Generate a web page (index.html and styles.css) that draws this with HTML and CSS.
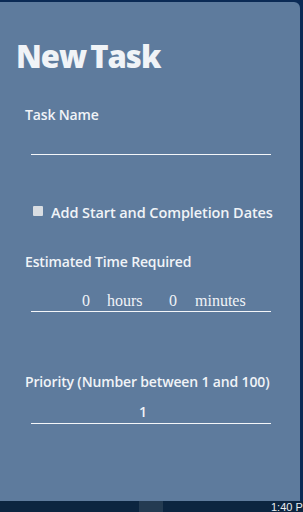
FILE: index.html
```html
<!DOCTYPE html>
<html>
<head>
<meta charset="utf-8">
<link rel="stylesheet" href="styles.css">
</head>
<body>
<div class="screen">
  <main class="panel">
    <h1 class="title">New<span class="gap"></span>Task</h1>
    <section class="field field-name">
      <label class="label">Task Name</label>
      <div class="input"></div>
    </section>
    <div class="check-row">
      <span class="checkbox"></span>
      <span class="check-label">Add Start and Completion Dates</span>
    </div>
    <section class="field field-time">
      <label class="label">Estimated Time Required</label>
      <div class="input time-input">
        <span class="num n1">0</span>
        <span class="unit u1">hours</span>
        <span class="num n2">0</span>
        <span class="unit u2">minutes</span>
      </div>
    </section>
    <section class="field field-priority">
      <label class="label">Priority (Number between 1 and 100)</label>
      <div class="input priority-input">1</div>
    </section>
  </main>
  <footer class="taskbar">
    <span class="tb-item"></span>
    <span class="clock">1:40 P</span>
  </footer>
</div>
</body>
</html>
```

FILE: styles.css
```css
html, body {
  margin: 0;
  padding: 0;
  width: 303px;
  height: 512px;
  overflow: hidden;
  background: #0b2a55;
}
.screen {
  display: flex;
  flex-direction: column;
  height: 512px;
}
.panel {
  margin-top: 2px;
  width: 300px;
  height: 499px;
  background: #5e7b9d;
  border-top-right-radius: 6px;
  color: #f0f3f7;
  font-family: "Open Sans", sans-serif;
  box-sizing: border-box;
  padding-top: 33px;
}
.title {
  margin: 0 0 0 16px;
  font-size: 31px;
  font-weight: 800;
  letter-spacing: -1px;
  line-height: 42px;
}
.gap { display: inline-block; width: 4px; }
.field {
  padding-left: 25px;
}
.label {
  display: block;
  font-size: 14px;
  font-weight: 600;
  letter-spacing: -0.15px;
  line-height: 18px;
}
.input {
  margin-left: 6px;
  width: 240px;
  border-bottom: 1.5px solid #f4f6f9;
  box-sizing: border-box;
}
.field-name { margin-top: 29px; }
.field-name .input { height: 31px; }
.check-row {
  display: flex;
  align-items: center;
  margin: 48px 0 0 33px;
}
.checkbox {
  width: 10px;
  height: 10px;
  background: #d9dde2;
  border-radius: 1px;
  margin-right: 8px;
  margin-top: -4px;
}
.check-label {
  font-size: 14.5px;
  font-weight: 600;
  letter-spacing: -0.1px;
  line-height: 20px;
}
.field-time { margin-top: 30px; }
.time-input {
  margin-top: 21px;
  height: 20px;
  position: relative;
  font-family: "Liberation Serif", serif;
  font-size: 16px;
}
.time-input span { position: absolute; top: 0; line-height: 18px; }
.n1 { left: 51px; }
.u1 { left: 76px; }
.n2 { left: 138px; }
.u2 { left: 164px; }
.field-priority { margin-top: 61px; }
.priority-input {
  margin-top: 12px;
  height: 21px;
  padding-right: 16px;
  text-align: center;
  font-size: 14px;
  font-weight: 600;
  line-height: 18px;
}
.taskbar {
  height: 11px;
  background: #0c2540;
  position: relative;
  display: flex;
}
.tb-item {
  margin-left: 139px;
  width: 24px;
  height: 11px;
  background: #243b52;
}
.clock {
  position: absolute;
  left: 271px;
  top: 1px;
  font-family: "Liberation Sans", sans-serif;
  font-size: 11px;
  color: #e8ecf0;
  line-height: 11px;
  white-space: nowrap;
}
```
